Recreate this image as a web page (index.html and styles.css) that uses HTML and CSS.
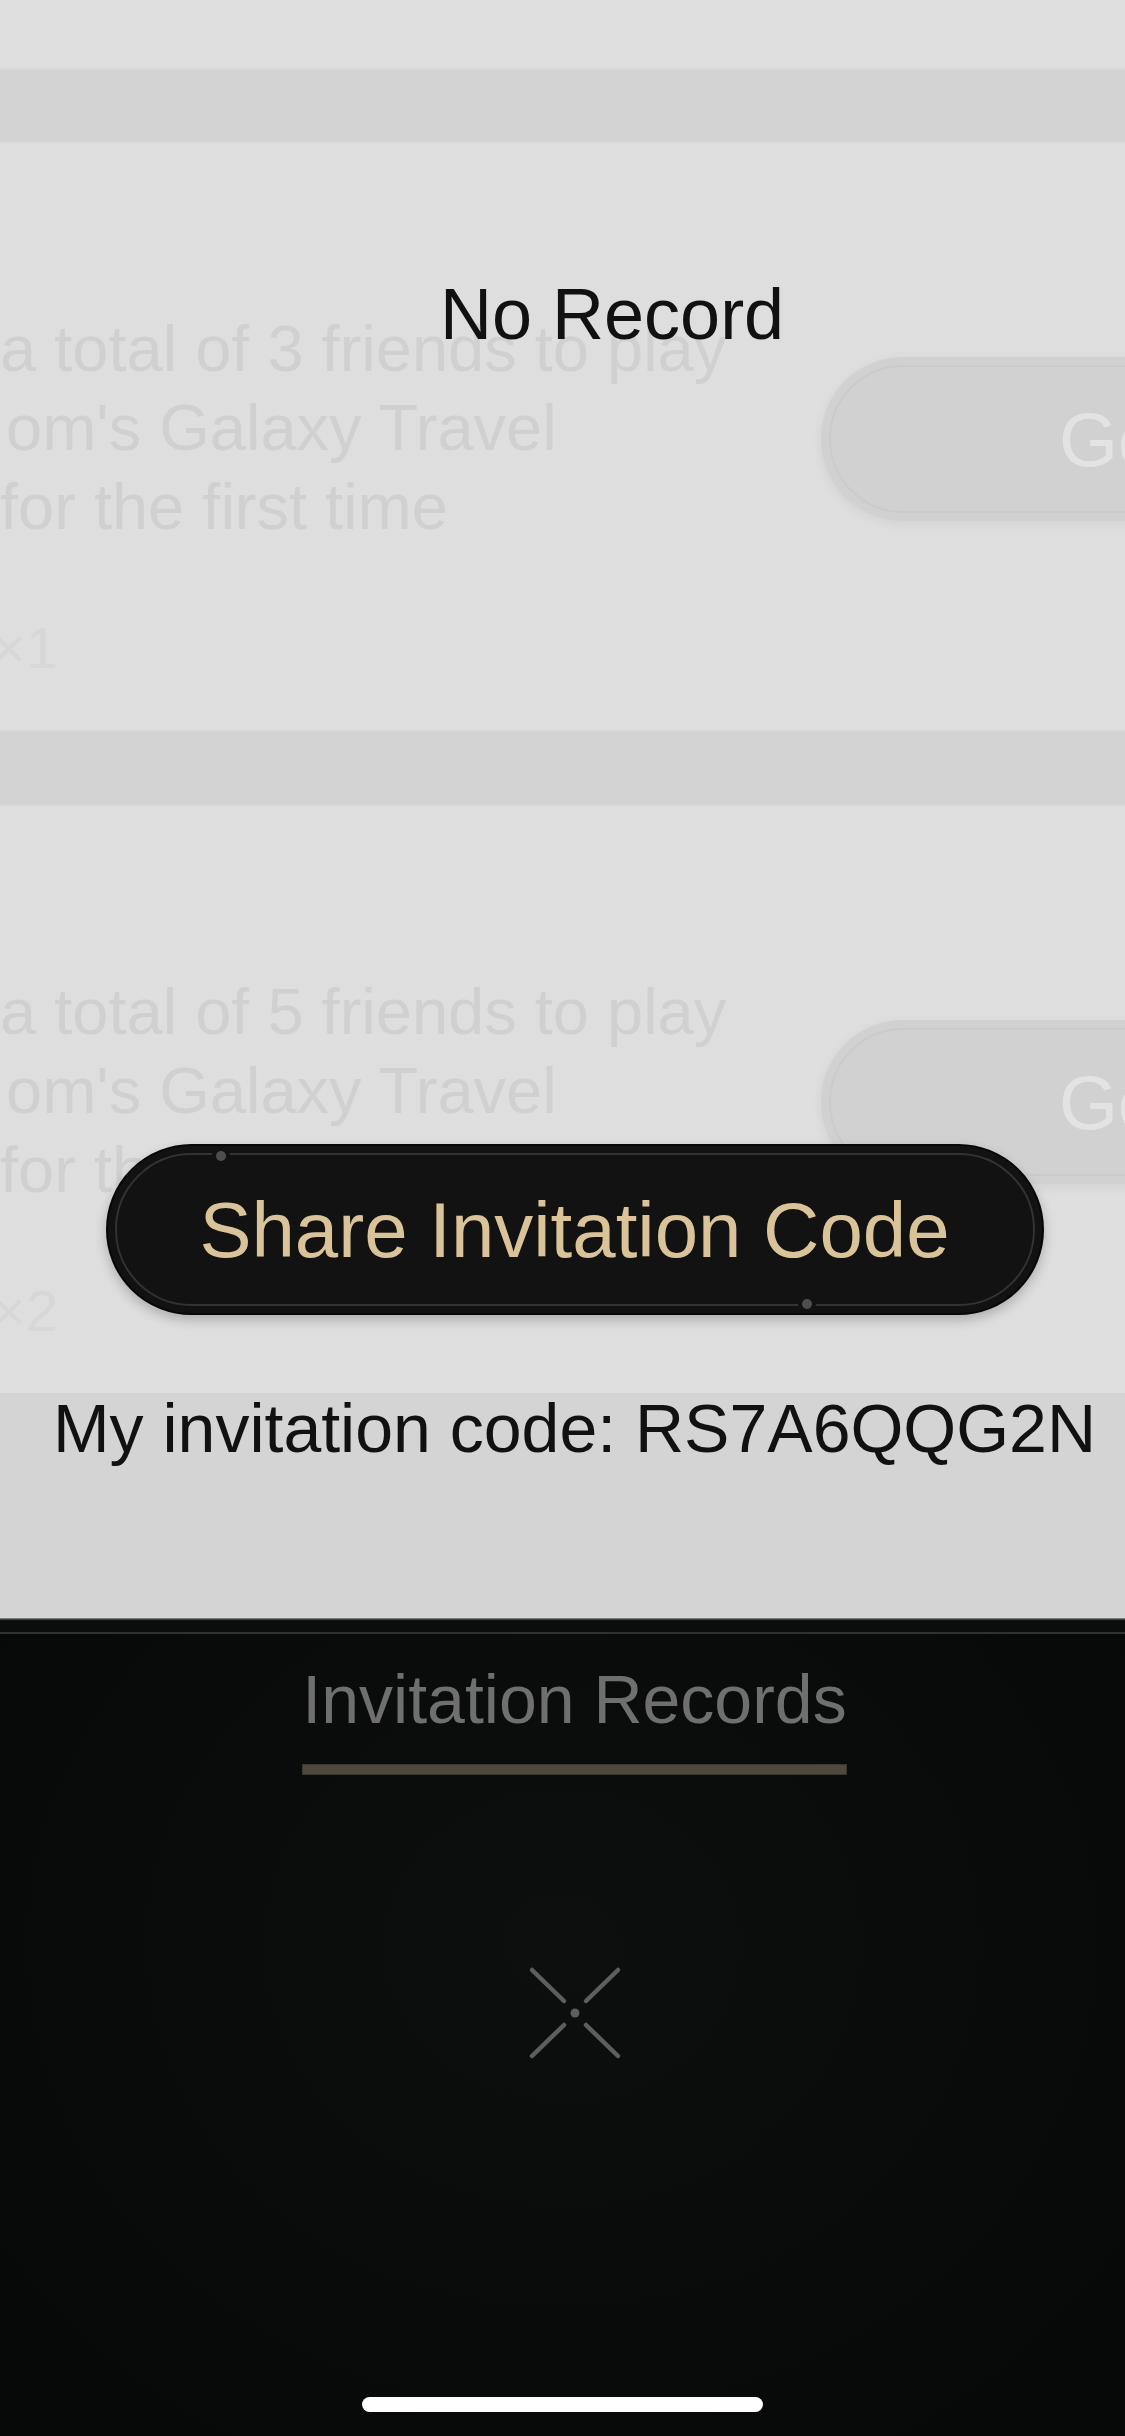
FILE: index.html
```html
<!DOCTYPE html>
<html lang="en">
<head>
  <meta charset="UTF-8" />
  <meta name="viewport" content="width=device-width, initial-scale=1.0" />
  <title>Invite Friends</title>
  <link rel="stylesheet" href="styles.css">
</head>
<body>
  <div class="screen">
    <section class="sheet">
      <!-- task list behind the veil -->
      <div class="task-list">
        <div class="task-top"></div>
        <div class="task-band"></div>
        <div class="task">
          <div class="task-text">
            <p class="task-desc">a total of 3 friends to play<br><span class="cut">om's Galaxy Travel</span><br>for the first time</p>
            <p class="task-reward">×1</p>
          </div>
          <div class="task-btn"><span>Go</span></div>
        </div>
        <div class="task-band"></div>
        <div class="task">
          <div class="task-text">
            <p class="task-desc">a total of 5 friends to play<br><span class="cut">om's Galaxy Travel</span><br>for the first time</p>
            <p class="task-reward">×2</p>
          </div>
          <div class="task-btn"><span>Go</span></div>
        </div>
        <div class="task-foot"></div>
      </div>

      <div class="sheet-front">
        <p class="empty-note">No Record</p>
        <button class="share-btn" type="button">
          <span class="share-dot dot-top"></span>
          Share Invitation Code
          <span class="share-dot dot-bottom"></span>
        </button>
        <p class="invite-code">My invitation code: RS7A6QQG2N</p>
      </div>
    </section>

    <section class="records">
      <div class="tab">
        <span class="tab-label">Invitation Records</span>
        <span class="tab-line"></span>
      </div>
      <button class="close-btn" type="button" aria-label="Close">
        <svg width="96" height="96" viewBox="0 0 96 96">
          <g stroke="#5e5e5e" stroke-width="4.5" stroke-linecap="round">
            <line x1="5" y1="5" x2="37" y2="36" />
            <line x1="91" y1="5" x2="59" y2="36" />
            <line x1="5" y1="91" x2="37" y2="60" />
            <line x1="91" y1="91" x2="59" y2="60" />
          </g>
          <circle cx="48" cy="48" r="4.5" fill="#5e5e5e" />
        </svg>
      </button>
      <div class="home-bar"></div>
    </section>
  </div>
</body>
</html>
```

FILE: styles.css
```css
html, body {
  margin: 0;
  padding: 0;
  background: #0a0b0b;
  font-family: "Liberation Sans", Arial, sans-serif;
}

.screen {
  width: 1125px;
  height: 2436px;
  overflow: hidden;
  display: flex;
  flex-direction: column;
}

/* upper light sheet */
.sheet {
  position: relative;
  height: 1618px;
  flex-shrink: 0;
  overflow: hidden;
  background: #dedede;
}

.task-top {
  height: 68px;
}

.task-band {
  height: 75px;
  background: #d3d3d3;
  box-shadow: inset 0 2px 0 #d8d8d8, inset 0 -2px 0 #d8d8d8;
}

.task-band + .task + .task-band {
  height: 76px;
}

.task {
  box-sizing: border-box;
  height: 587px;
  padding-top: 166px;
  display: flex;
  align-items: flex-start;
}

.task-text {
  width: 821px;
  flex-shrink: 0;
  color: #d0d0d0;
}

.task-desc {
  margin: 0;
  font-size: 65px;
  line-height: 79px;
  white-space: nowrap;
}

.task-desc .cut {
  margin-left: 6px;
}

.task-reward {
  margin: 72px 0 0 -8px;
  font-size: 58px;
  line-height: 60px;
  color: #d7d7d7;
}

.task-btn {
  position: relative;
  flex-shrink: 0;
  margin-top: 48px;
  width: 460px;
  height: 164px;
  border-radius: 82px;
  background: #d1d1d1;
  box-shadow: 0 3px 12px rgba(0, 0, 0, 0.05);
  display: flex;
  align-items: center;
  padding-left: 238px;
  box-sizing: border-box;
  font-size: 76px;
  color: #e3e3e3;
}

.task-btn::before {
  content: "";
  position: absolute;
  inset: 8px;
  border: 2px solid #cbcbcb;
  border-radius: 76px;
}

.task-foot {
  height: 225px;
  background: #d4d4d4;
}

/* crisp layer on top of the list */
.sheet-front {
  position: absolute;
  inset: 0;
  padding-left: 24px;
  display: flex;
  flex-direction: column;
  align-items: center;
}

.empty-note {
  align-self: flex-start;
  margin: 278px 0 0 416px;
  font-size: 72px;
  line-height: 72px;
  color: #111;
}

.share-btn {
  position: relative;
  margin-top: 794px;
  width: 938px;
  height: 171px;
  flex-shrink: 0;
  border: 2px solid #070707;
  border-radius: 86px;
  background: #121212;
  box-shadow: 0 5px 12px rgba(0, 0, 0, 0.22);
  font: inherit;
  font-size: 78px;
  line-height: 1;
  color: #dac398;
  display: flex;
  align-items: center;
  justify-content: center;
  padding: 0;
}

.share-btn::before {
  content: "";
  position: absolute;
  inset: 7px;
  border: 2px solid #333;
  border-radius: 80px;
}

.share-dot {
  position: absolute;
  width: 10px;
  height: 10px;
  border-radius: 50%;
  background: #4e4e4e;
  box-shadow: 0 0 0 4px #121212;
}

.dot-top {
  left: 108px;
  top: 5px;
}

.dot-bottom {
  left: 694px;
  bottom: 4px;
}

.invite-code {
  margin: 79px 0 0;
  font-size: 68px;
  line-height: 68px;
  color: #111;
  white-space: nowrap;
}

/* dark records panel */
.records {
  position: relative;
  flex: 1;
  padding: 47px 0 0 24px;
  display: flex;
  flex-direction: column;
  align-items: center;
  background:
    linear-gradient(#9a9a9a 0, #1b1c1c 2px, #0b0c0c 3px, #0b0c0c 14px, #2e3231 14px, #2e3231 16px, transparent 16px),
    radial-gradient(ellipse at 50% 40%, #0d0e0e 0%, #0a0b0b 45%, #070808 90%);
}

.tab {
  display: flex;
  flex-direction: column;
  align-items: stretch;
}

.tab-label {
  font-size: 68px;
  line-height: 68px;
  color: #6f6f6f;
  white-space: nowrap;
}

.tab-line {
  margin-top: 31px;
  height: 11px;
  box-sizing: border-box;
  background: #4e493e;
  border: 1px solid #3a372f;
}

.close-btn {
  margin-top: 190px;
  width: 96px;
  height: 96px;
  padding: 0;
  border: 0;
  background: none;
}

.close-btn svg {
  display: block;
}

.home-bar {
  position: absolute;
  left: 362px;
  bottom: 24px;
  width: 401px;
  height: 15px;
  border-radius: 8px;
  background: #fff;
}
```
